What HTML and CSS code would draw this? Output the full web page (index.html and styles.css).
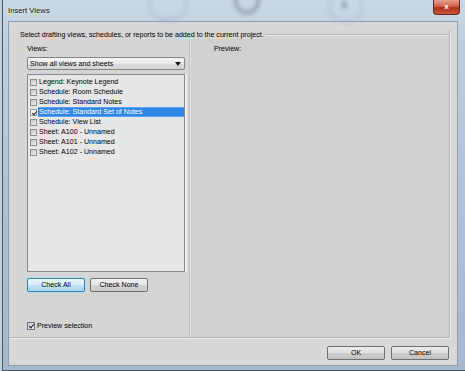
FILE: index.html
```html
<!DOCTYPE html>
<html>
<head>
<meta charset="utf-8">
<link rel="stylesheet" href="styles.css">
</head>
<body>
<div class="window">
  <div class="deco deco-a"></div>
  <div class="deco deco-b"></div>
  <div class="deco deco-c"></div>
  <div class="titlebar"><span class="title">Insert Views</span></div>
  <div class="close">x</div>
  <div class="client">
    <div class="panel">
      <div class="panel-head">
        <span class="desc">Select drafting views, schedules, or reports to be added to the current project.</span>
        <span class="rule"></span>
      </div>
      <div class="panel-body">
        <div class="left-col">
          <div class="label">Views:</div>
          <div class="select">
            <span>Show all views and sheets</span>
            <span class="arrow"></span>
          </div>
          <div class="list">
            <div class="row"><span class="cb"></span><span class="txt">Legend: Keynote Legend</span></div>
            <div class="row"><span class="cb"></span><span class="txt">Schedule: Room Schedule</span></div>
            <div class="row"><span class="cb"></span><span class="txt">Schedule: Standard Notes</span></div>
            <div class="row selected"><span class="cb checked"></span><span class="txt">Schedule: Standard Set of Notes</span></div>
            <div class="row"><span class="cb"></span><span class="txt">Schedule: View List</span></div>
            <div class="row"><span class="cb"></span><span class="txt">Sheet: A100 - Unnamed</span></div>
            <div class="row"><span class="cb"></span><span class="txt">Sheet: A101 - Unnamed</span></div>
            <div class="row"><span class="cb"></span><span class="txt">Sheet: A102 - Unnamed</span></div>
          </div>
          <div class="btn-row">
            <div class="btn btn-focus">Check All</div>
            <div class="btn">Check None</div>
          </div>
          <div class="preview-check">
            <span class="cb2"></span><span>Preview selection</span>
          </div>
        </div>
        <div class="preview-col">
          <div class="label">Preview:</div>
        </div>
      </div>
    </div>
    <div class="footer">
      <div class="btn btn-big">OK</div>
      <div class="btn btn-big">Cancel</div>
    </div>
  </div>
</div>
</body>
</html>
```
FILE: styles.css
```css
html, body {
  margin: 0;
  padding: 0;
  background: #b8c8d9;
}
body {
  font-family: "Liberation Sans", Arial, sans-serif;
  font-size: 7.1px;
  color: #000;
}
.window {
  position: relative;
  width: 465px;
  height: 371px;
  display: flex;
  flex-direction: column;
  overflow: hidden;
  background: linear-gradient(180deg, #cbd8e6 0%, #c0cfdf 10%, #aec0d3 60%, #a6b8cc 100%);
  box-shadow: inset 2px 0 0 #c2cfdc, inset 3px 0 0 #46566a, inset 0 -1px 0 #44546a;
}
.deco {
  position: absolute;
  border-radius: 50%;
  filter: blur(2px);
}
.deco-a {
  left: 148px; top: -14px; width: 34px; height: 30px;
  border: 3px solid rgba(160, 175, 195, 0.45);
}
.deco-b {
  left: 234px; top: -14px; width: 20px; height: 22px;
  border: 3px solid rgba(60, 70, 85, 0.45);
  border-top-color: transparent;
}
.deco-c {
  left: 328px; top: -10px; width: 30px; height: 28px;
  border: 3px solid rgba(160, 175, 195, 0.4);
}
.deco-c::after {
  content: "";
  position: absolute;
  left: 11px; top: 8px; width: 5px; height: 8px;
  border-radius: 50%;
  background: rgba(80, 95, 115, 0.45);
}
.titlebar {
  position: relative;
  height: 21px;
  display: flex;
  align-items: center;
  padding-left: 8px;
  flex-shrink: 0;
}
.title {
  font-size: 7.7px;
  color: #111;
  text-shadow: 0 0 3px rgba(255, 255, 255, 0.9);
}
.close {
  position: absolute;
  left: 433px;
  top: 0;
  width: 27px;
  height: 15px;
  box-sizing: border-box;
  border: 1px solid #5e2a22;
  border-top: none;
  border-radius: 0 0 4px 4px;
  background: linear-gradient(180deg, #e5a18d 0%, #cf6148 45%, #b0301b 55%, #c9563a 100%);
  color: #fff;
  font-weight: bold;
  font-size: 8px;
  line-height: 13px;
  text-align: center;
}
.client {
  flex: 1;
  margin: 0 7px 5px 8px;
  border: 1px solid #8d9db0;
  background: #d8d8d8;
  display: flex;
  flex-direction: column;
  padding-top: 9px;
  min-height: 0;
}
.panel {
  flex: 1;
  display: flex;
  flex-direction: column;
  margin-right: 7px;
  border-right: 1px solid #b3b3b3;
  border-bottom: 1px solid #b3b3b3;
  box-shadow: 1px 1px 0 #efefef;
  background: #d5d5d5;
  min-height: 0;
}
.panel-head {
  height: 8px;
  display: flex;
  align-items: center;
  padding-left: 11px;
  flex-shrink: 0;
}
.desc {
  white-space: nowrap;
  line-height: 8px;
}
.rule {
  flex: 1;
  margin-left: 2px;
  border-top: 1px solid #b8b8b8;
  border-bottom: 1px solid #ececec;
}
.panel-body {
  flex: 1;
  display: flex;
  min-height: 0;
}
.left-col {
  width: 162px;
  padding-left: 18px;
  display: flex;
  flex-direction: column;
}
.label {
  margin-top: 6px;
  line-height: 8px;
  height: 8px;
}
.select {
  margin-top: 4px;
  width: 158px;
  height: 13px;
  box-sizing: border-box;
  border: 1px solid #858585;
  border-radius: 2px;
  background: linear-gradient(180deg, #f6f6f6 0%, #e9e9e9 50%, #dcdcdc 51%, #d4d4d4 100%);
  display: flex;
  align-items: center;
  justify-content: space-between;
  padding: 0 3px 0 2px;
}
.arrow {
  width: 0;
  height: 0;
  border-left: 3px solid transparent;
  border-right: 3px solid transparent;
  border-top: 4px solid #111;
}
.list {
  margin-top: 4px;
  width: 158px;
  height: 198px;
  box-sizing: border-box;
  border: 1px solid #858991;
  background: #e7e7e7;
  padding-top: 2px;
  box-shadow: 2px 0 0 #ececec;
}
.row {
  height: 10px;
  display: flex;
  align-items: center;
  padding-left: 2px;
}
.cb {
  width: 7px;
  height: 7px;
  box-sizing: border-box;
  border: 1px solid #8e8e8e;
  background: linear-gradient(135deg, #c4c4c4, #f0f0f0);
  margin-right: 1px;
  flex-shrink: 0;
  position: relative;
}
.cb.checked {
  border-color: #a0a0a0;
  background: #f4f4f4;
}
.cb.checked::after,
.cb2::after {
  content: "";
  position: absolute;
  left: 1.5px;
  top: 0;
  width: 2px;
  height: 4px;
  border-right: 1.3px solid #222;
  border-bottom: 1.3px solid #222;
  transform: rotate(40deg);
}
.txt {
  flex: 1;
  height: 10px;
  line-height: 10px;
  padding-left: 1px;
  white-space: nowrap;
}
.row.selected .txt {
  background: #2f86e4;
  color: #fff;
  box-shadow: inset 0 1px 0 #5aa2ee, inset 0 -1px 0 #5aa2ee;
}
.btn-row {
  margin-top: 6px;
  display: flex;
  gap: 5px;
}
.btn {
  width: 58px;
  height: 14px;
  box-sizing: border-box;
  border: 1px solid #707070;
  border-radius: 2px;
  background: linear-gradient(180deg, #f0f0f0 0%, #e4e4e4 50%, #d3d3d3 51%, #c9c9c9 100%);
  display: flex;
  align-items: center;
  justify-content: center;
  color: #000;
}
.btn-focus {
  border-color: #3c7fb1;
  background: linear-gradient(180deg, #e8f5fc 0%, #d8eefa 50%, #bde3f6 51%, #a9d8f1 100%);
  box-shadow: 0 0 0 1px #b6dcef;
}
.preview-check {
  margin-top: auto;
  margin-bottom: 7px;
  display: flex;
  align-items: center;
  height: 9px;
}
.cb2 {
  width: 8px;
  height: 8px;
  box-sizing: border-box;
  border: 1px solid #6f7183;
  background: linear-gradient(135deg, #c7c8d6, #eeeef4);
  margin-right: 2px;
  position: relative;
}
.cb2::after {
  left: 2px;
}
.preview-col {
  flex: 1;
  border-left: 1px solid #c2c2c2;
  box-shadow: inset 1px 0 0 #e2e2e2;
  background: #d0d0d0;
  padding-left: 24px;
}
.footer {
  height: 27px;
  flex-shrink: 0;
  display: flex;
  justify-content: flex-end;
  align-items: flex-start;
  gap: 6px;
  padding: 8px 8px 0 0;
  box-sizing: border-box;
}
.btn-big {
  width: 58px;
  height: 14px;
  background: linear-gradient(180deg, #ececec 0%, #dedede 50%, #cdcdcd 51%, #c3c3c3 100%);
}
```
